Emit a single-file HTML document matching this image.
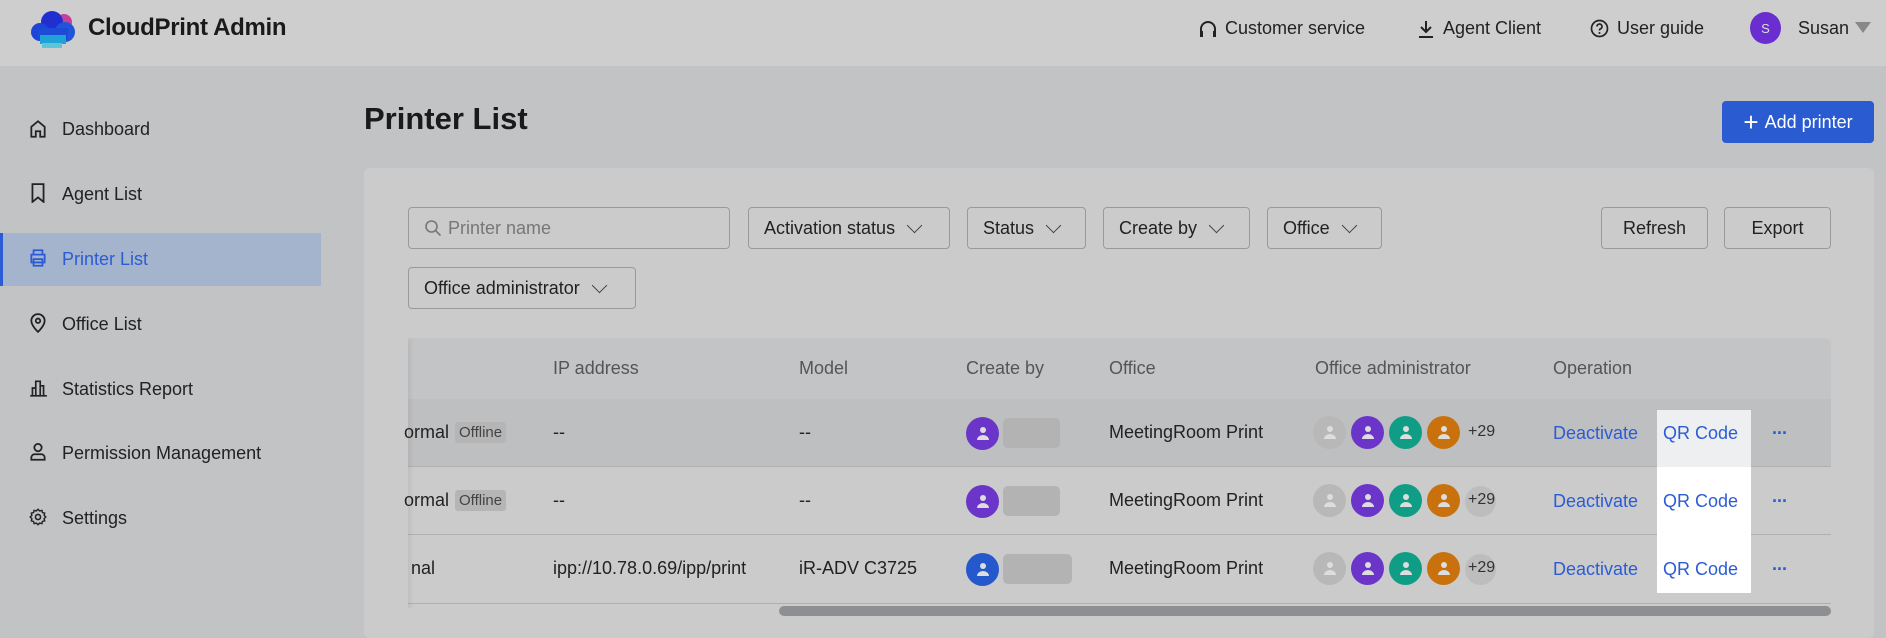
<!DOCTYPE html>
<html><head><meta charset="utf-8"><style>
*{box-sizing:border-box;margin:0;padding:0}
body{width:1886px;height:624px;overflow:hidden;background:#c2c3c5;font-family:"Liberation Sans",sans-serif;color:#222;position:relative;font-size:18px}
.abs{position:absolute}
.hdr{left:0;top:0;width:1886px;height:66px;background:#cecece}
.nav{display:flex;align-items:center;gap:8px;top:17px;font-size:18px;color:#222}
.side{left:62px;font-size:18px;color:#222;line-height:20px}
.sico{left:29px;width:18px;height:20px}
.card{left:364px;top:168px;width:1510px;height:470px;background:#cbcbcb;border-radius:6px}
.btn{border:1px solid #9a9a9a;border-radius:4px;height:42px;display:flex;align-items:center;padding:0 15px;font-size:18px;color:#222;background:#cbcbcb}
.chev{width:11px;height:11px;border-right:1.6px solid #444;border-bottom:1.6px solid #444;transform:rotate(45deg);margin-left:14px;margin-top:-6px}
.th{color:#555;font-size:18px;top:358px}
.row{left:408px;width:1423px;border-bottom:1px solid #b0b0b0}
.cell{font-size:18px;color:#222}
.av{width:33px;height:33px;border-radius:50%;display:flex;align-items:center;justify-content:center}
.tag{background:#b5b5b5;color:#444;font-size:15px;padding:2px 4px;border-radius:3px;margin-left:6px}
.lnk{color:#2c5bd6}
</style></head><body>
<div class="abs hdr"></div>
<svg class="abs" style="left:30px;top:10px" width="50" height="40" viewBox="0 0 50 40">
<circle cx="34" cy="12" r="8" fill="#c4419c"/>
<circle cx="22" cy="12" r="11" fill="#1f2fd0"/>
<circle cx="10" cy="22" r="9" fill="#1f44d8"/>
<circle cx="35" cy="22" r="10" fill="#2155d8"/>
<rect x="8" y="18" width="30" height="12" fill="#1d4ad6"/>
<rect x="10" y="25" width="26" height="9" fill="#1fa3d6"/>
<rect x="12" y="33" width="20" height="5" fill="#5ec4d8"/>
</svg>
<div class="abs" style="left:88px;top:14px;font-size:24px;font-weight:bold;color:#1a1a1a;letter-spacing:-0.3px">CloudPrint Admin</div>

<div class="abs nav" style="left:1199px;top:18px"><svg width="18" height="18" viewBox="0 0 18 18"><path d="M2 16V9a7 7 0 0 1 14 0v7" fill="none" stroke="#222" stroke-width="2"/><rect x="1" y="11" width="3" height="6" fill="#222"/><rect x="14" y="11" width="3" height="6" fill="#222"/></svg>Customer service</div>
<div class="abs nav" style="left:1417px;top:18px"><svg width="18" height="20" viewBox="0 0 18 20"><path d="M9 2v11M4 8l5 5 5-5M2 18h14" fill="none" stroke="#222" stroke-width="2"/></svg>Agent Client</div>
<div class="abs nav" style="left:1590px;top:18px"><svg width="19" height="19" viewBox="0 0 19 19"><circle cx="9.5" cy="9.5" r="8" fill="none" stroke="#222" stroke-width="1.7"/><path d="M7 7.5a2.5 2.5 0 1 1 3.5 2.3c-.8.4-1 .9-1 1.7" fill="none" stroke="#222" stroke-width="1.7"/><circle cx="9.5" cy="14" r="1" fill="#222"/></svg>User guide</div>
<div class="abs" style="left:1750px;top:12px;width:31px;height:32px;border-radius:50%;background:#6a2ed0;color:#ddd;font-size:13px;display:flex;align-items:center;justify-content:center">S</div>
<div class="abs" style="left:1798px;top:18px;font-size:18px">Susan</div>
<div class="abs" style="left:1855px;top:22px;width:0;height:0;border-left:8px solid transparent;border-right:8px solid transparent;border-top:11px solid #888"></div>

<!-- sidebar -->
<div class="abs" style="left:0;top:233px;width:321px;height:53px;background:#a4b4cc;border-left:3px solid #2c5bd6"></div>
<svg class="abs sico" style="top:119px" viewBox="0 0 16 18"><path d="M2 16V7l6-5 6 5v9h-4v-5H6v5z" fill="none" stroke="#222" stroke-width="1.6"/></svg>
<div class="abs side" style="top:119px">Dashboard</div>
<svg class="abs sico" style="top:183px" viewBox="0 0 16 18"><path d="M3 1h10v16l-5-4-5 4z" fill="none" stroke="#222" stroke-width="1.6"/></svg>
<div class="abs side" style="top:184px">Agent List</div>
<svg class="abs sico" style="top:248px" viewBox="0 0 16 18"><path d="M4 6V2h8v4M2 6h12v7H2zM4 10h8v6H4z" fill="none" stroke="#2c5bd6" stroke-width="1.6"/></svg>
<div class="abs side" style="top:249px;color:#2c5bd6">Printer List</div>
<svg class="abs sico" style="top:313px" viewBox="0 0 16 18"><path d="M8 17s6-5.5 6-10A6 6 0 0 0 2 7c0 4.5 6 10 6 10z" fill="none" stroke="#222" stroke-width="1.6"/><circle cx="8" cy="7" r="2" fill="none" stroke="#222" stroke-width="1.6"/></svg>
<div class="abs side" style="top:314px">Office List</div>
<svg class="abs sico" style="top:378px" viewBox="0 0 16 18"><path d="M1 16h15M3 16V9h3v7M6 16V3h4v13M10 16V7h3v9" fill="none" stroke="#222" stroke-width="1.5"/></svg>
<div class="abs side" style="top:379px">Statistics Report</div>
<svg class="abs sico" style="top:442px" viewBox="0 0 16 18"><circle cx="8" cy="5" r="3.3" fill="none" stroke="#222" stroke-width="1.6"/><path d="M2 16v-2a3 3 0 0 1 3-3h6a3 3 0 0 1 3 3v2z" fill="none" stroke="#222" stroke-width="1.6"/></svg>
<div class="abs side" style="top:443px">Permission Management</div>
<svg class="abs sico" style="top:507px" viewBox="0 0 16 18"><path d="M8 2l1.5 1.5 2-.5.5 2 2 .5-.5 2L15 9l-1.5 1.5.5 2-2 .5-.5 2-2-.5L8 16l-1.5-1.5-2 .5-.5-2-2-.5.5-2L1 9l1.5-1.5-.5-2 2-.5.5-2 2 .5z" fill="none" stroke="#222" stroke-width="1.3"/><circle cx="8" cy="9" r="2.3" fill="none" stroke="#222" stroke-width="1.4"/></svg>
<div class="abs side" style="top:508px">Settings</div>

<div class="abs" style="left:364px;top:101px;font-size:31px;font-weight:bold;color:#1a1a1a">Printer List</div>
<div class="abs" style="left:1722px;top:101px;width:152px;height:42px;background:#2a5bd0;border-radius:4px;color:#fff;font-size:18px;display:flex;align-items:center;justify-content:center;gap:6px"><span style="font-size:26px;font-weight:300;line-height:1">+</span>Add printer</div>

<div class="abs card"></div>
<div class="abs btn" style="left:408px;top:207px;width:322px;color:#777"><svg width="18" height="18" viewBox="0 0 18 18" style="margin-right:6px"><circle cx="7.5" cy="7.5" r="5.5" fill="none" stroke="#777" stroke-width="1.6"/><path d="M11.5 11.5l5 5" stroke="#777" stroke-width="1.6"/></svg>Printer name</div>
<div class="abs btn" style="left:748px;top:207px;width:202px">Activation status<span class="chev"></span></div>
<div class="abs btn" style="left:967px;top:207px;width:119px">Status<span class="chev"></span></div>
<div class="abs btn" style="left:1103px;top:207px;width:147px">Create by<span class="chev"></span></div>
<div class="abs btn" style="left:1267px;top:207px;width:115px">Office<span class="chev"></span></div>
<div class="abs btn" style="left:1601px;top:207px;width:107px;justify-content:center">Refresh</div>
<div class="abs btn" style="left:1724px;top:207px;width:107px;justify-content:center">Export</div>
<div class="abs btn" style="left:408px;top:267px;width:228px">Office administrator<span class="chev"></span></div>

<!-- table -->
<div class="abs" style="left:408px;top:338px;width:1423px;height:61px;background:#c3c4c6;border-radius:6px 6px 0 0"></div>
<div class="abs th" style="left:553px">IP address</div>
<div class="abs th" style="left:799px">Model</div>
<div class="abs th" style="left:966px">Create by</div>
<div class="abs th" style="left:1109px">Office</div>
<div class="abs th" style="left:1315px">Office administrator</div>
<div class="abs th" style="left:1553px">Operation</div>
<div class="abs row" style="top:399px;height:68px;background:#bebfc0"></div>
<div class="abs row" style="top:467px;height:68px"></div>
<div class="abs row" style="top:535px;height:69px"></div>
<div class="abs" style="left:1657px;top:410px;width:94px;height:57px;background:#eeeff0"></div>
<div class="abs" style="left:1657px;top:467px;width:94px;height:126px;background:#fff"></div>
<div class="abs" style="left:408px;top:338px;width:6px;height:270px;background:linear-gradient(90deg,rgba(0,0,0,0.06),rgba(0,0,0,0))"></div>
<div class="abs" style="left:779px;top:606px;width:1052px;height:10px;border-radius:5px;background:#8e8f92"></div>

<div id="rows"></div>
<script>
var ys=[433,501,569],h='';
var pc=['#6a35c8','#6a35c8','#2558cc'];
var person='<svg width="14" height="15" viewBox="0 0 14 15"><circle cx="7" cy="4" r="3" fill="#ddd"/><path d="M1 14a6 5 0 0 1 12 0z" fill="#ddd"/></svg>';
for(var i=0;i<3;i++){var y=ys[i];
h+='<div class="abs cell" style="left:408px;top:'+(y-11)+'px;display:flex;align-items:center">'+(i<2?'<span style="margin-left:-4px">ormal</span><span class="tag">Offline</span>':'<span style="margin-left:3px">nal</span>')+'</div>';
h+='<div class="abs cell" style="left:553px;top:'+(y-11)+'px">'+(i<2?'--':'ipp://10.78.0.69/ipp/print')+'</div>';
h+='<div class="abs cell" style="left:799px;top:'+(y-11)+'px">'+(i<2?'--':'iR-ADV C3725')+'</div>';
h+='<div class="abs av" style="left:966px;top:'+(y-16)+'px;background:'+pc[i]+'">'+person+'</div>';
h+='<div class="abs" style="left:1003px;top:'+(y-15)+'px;width:'+(i<2?57:69)+'px;height:30px;border-radius:5px;background:#b3b3b3"></div>';
h+='<div class="abs cell" style="left:1109px;top:'+(y-11)+'px">MeetingRoom Print</div>';
var cs=['#b8b8b8','#6a35c8','#0f9e85','#c9720d'];
for(var j=0;j<4;j++)h+='<div class="abs av" style="left:'+(1313+j*38)+'px;top:'+(y-17)+'px;background:'+cs[j]+'">'+person+'</div>';
if(i>0)h+='<div class="abs" style="left:1465px;top:'+(y-15)+'px;width:31px;height:31px;border-radius:50%;background:#bdbdbd"></div>';
h+='<div class="abs cell" style="left:1468px;top:'+(y-10)+'px;font-size:16px;color:#333">+29</div>';
h+='<div class="abs cell lnk" style="left:1553px;top:'+(y-10)+'px">Deactivate</div>';
h+='<div class="abs cell lnk" style="left:1663px;top:'+(y-10)+'px">QR Code</div>';
h+='<div class="abs cell lnk" style="left:1772px;top:'+(y-10)+'px;font-weight:bold;letter-spacing:-1px">···</div>';
}
document.getElementById('rows').innerHTML=h;
</script>
</body></html>
